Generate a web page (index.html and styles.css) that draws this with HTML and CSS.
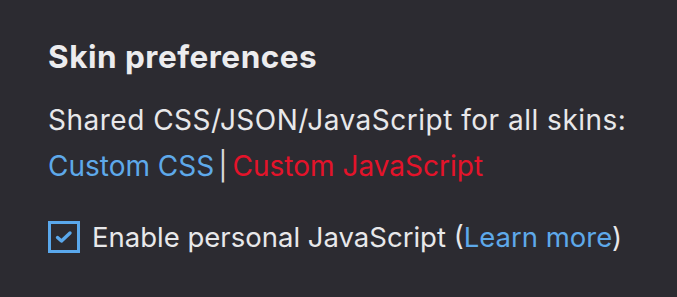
FILE: index.html
```html
<!DOCTYPE html>
<html lang="en">
<head>
    <meta charset="UTF-8">
    <meta name="viewport" content="width=device-width, initial-scale=1.0">
    <title>Skin preferences</title>
    <link rel="stylesheet" href="styles.css">
</head>
<body>
    <div class="prefs">
        <h2>Skin preferences</h2>
        <p class="shared">Shared CSS/JSON/JavaScript for all skins:</p>
        <p class="links">
            <a href="#" class="link">Custom CSS</a><span class="sep">|</span><a href="#" class="link new">Custom JavaScript</a>
        </p>
        <label class="check">
            <span class="box">
                <svg width="20" height="16" viewBox="0 0 20 16">
                    <path d="M3.5 8.5 L7.5 12 L16 4" fill="none" stroke="#5aa8ec" stroke-width="3.4" stroke-linecap="round" stroke-linejoin="round"/>
                </svg>
            </span>
            <span class="label-text">Enable personal JavaScript (<a href="#" class="link">Learn more</a>)</span>
        </label>
    </div>
</body>
</html>
```

FILE: styles.css
```css
body {
    margin: 0;
    background-color: #2c2b31;
    font-family: Inter, "Noto Sans", sans-serif;
    color: #e8e8ea;
}
.prefs {
    padding: 40px 48px;
}
h2 {
    margin: 0 0 24px 0;
    font-size: 31.5px;
    line-height: 34px;
    font-weight: 700;
    letter-spacing: 0.5px;
    color: #ececee;
}
p {
    margin: 0;
    font-size: 28px;
    line-height: 44px;
    letter-spacing: 0.5px;
}
.links {
    margin-top: 2px;
    letter-spacing: 0;
}
.link {
    color: #5ea9ea;
    text-decoration: none;
}
.link.new {
    color: #e4132a;
}
.sep {
    color: #d8d8d8;
    margin: 0 5px 0 4px;
}
.check {
    display: flex;
    align-items: center;
    gap: 12px;
    margin-top: 27px;
    font-size: 27.5px;
    line-height: 44px;
    white-space: nowrap;
}
.box {
    flex: none;
    width: 26px;
    height: 26px;
    border: 3px solid #5aa8ec;
    display: flex;
    align-items: center;
    justify-content: center;
}
```
